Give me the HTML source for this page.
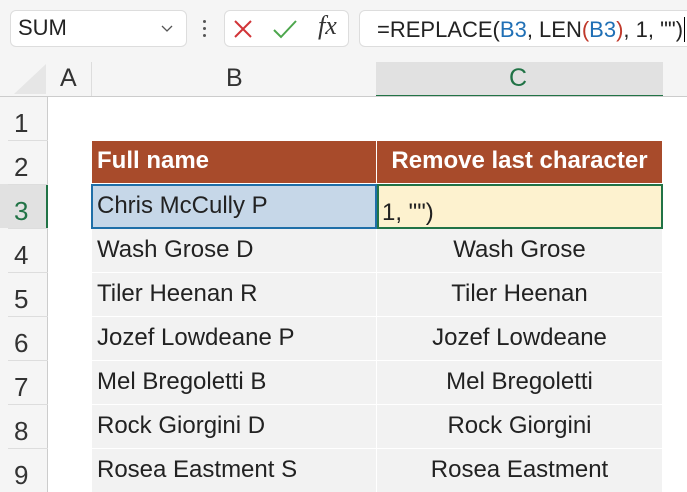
<!DOCTYPE html><html><head><style>
body{margin:0;width:687px;height:492px;overflow:hidden;background:#f5f5f5;font-family:"Liberation Sans",sans-serif;position:relative}
.a{position:absolute;box-sizing:border-box}
.t{font-size:24px;color:#222;white-space:nowrap}
</style></head><body>
<div class="a" style="left:10px;top:10px;width:177px;height:37px;background:#fff;border:1px solid #ddd;border-radius:6px"></div>
<div class="a t" style="left:18px;top:15px;font-size:22px">SUM</div>
<svg class="a" style="left:160px;top:24px" width="14" height="10"><path d="M2 2l5 5 5-5" stroke="#555" fill="none" stroke-width="1.3"/></svg>
<div class="a" style="left:203px;top:20px;width:3px;height:3px;background:#555;border-radius:2px;box-shadow:0 7px #555,0 14px #555"></div>
<div class="a" style="left:224px;top:10px;width:125px;height:37px;background:#fff;border:1px solid #ddd;border-radius:6px"></div>
<svg class="a" style="left:232px;top:18px" width="22" height="22"><path d="M3 3l16 16M19 3L3 19" stroke="#d13438" stroke-width="2"/></svg>
<svg class="a" style="left:272px;top:18px" width="26" height="22"><path d="M2 12l7 7L24 3" stroke="#4ca64c" fill="none" stroke-width="2"/></svg>
<div class="a" style="left:318px;top:11px;font:italic 26px 'Liberation Serif',serif;color:#333">fx</div>
<div class="a" style="left:359px;top:10px;width:340px;height:37px;background:#fff;border:1px solid #ddd;border-radius:6px"></div>
<div class="a t" style="left:377px;top:17px;font-size:22px">=REPLACE(<span style="color:#1f6fb5">B3</span>, LEN<span style="color:#c0392b">(</span><span style="color:#1f6fb5">B3</span><span style="color:#c0392b">)</span>, 1, "")<span style="border-left:1px solid #000;margin-left:1px"></span></div>
<div class="a" style="left:14px;top:64px;width:32px;height:30px;background:#e6e6e6;clip-path:polygon(100% 0,100% 100%,0 100%)"></div>
<div class="a t" style="left:60px;top:64px;color:#333;font-size:25px">A</div>
<div class="a" style="left:91px;top:62px;width:1px;height:34px;background:#ddd"></div>
<div class="a t" style="left:226px;top:64px;color:#333;font-size:25px">B</div>
<div class="a" style="left:376px;top:62px;width:287px;height:35px;background:#e1e1e1;border-bottom:2px solid #217346"></div>
<div class="a t" style="left:509px;top:64px;color:#217346;font-size:25px">C</div>
<div class="a" style="left:48px;top:96px;width:639px;height:396px;background:#fff"></div>
<div class="a" style="left:47px;top:96px;width:1px;height:396px;background:#ccc"></div>
<div class="a" style="left:0;top:96px;width:687px;height:1px;background:#ccc"></div>
<div class="a t" style="left:14px;top:108px;color:#333;font-size:26px">1</div>
<div class="a t" style="left:14px;top:152px;color:#333;font-size:26px">2</div>
<div class="a" style="left:0;top:184px;width:48px;height:44px;background:#e1e1e1;border-right:2px solid #217346"></div>
<div class="a t" style="left:14px;top:196px;color:#217346;font-size:26px">3</div>
<div class="a t" style="left:14px;top:240px;color:#333;font-size:26px">4</div>
<div class="a t" style="left:14px;top:284px;color:#333;font-size:26px">5</div>
<div class="a t" style="left:14px;top:328px;color:#333;font-size:26px">6</div>
<div class="a t" style="left:14px;top:372px;color:#333;font-size:26px">7</div>
<div class="a t" style="left:14px;top:416px;color:#333;font-size:26px">8</div>
<div class="a t" style="left:14px;top:460px;color:#333;font-size:26px">9</div>
<div class="a" style="left:8px;top:140px;width:40px;height:1px;background:#ddd;box-shadow:0 44px #ddd,0 88px #ddd,0 132px #ddd,0 176px #ddd,0 220px #ddd,0 264px #ddd,0 308px #ddd"></div>
<div class="a" style="left:92px;top:141px;width:284px;height:42px;background:#a84b2b"></div>
<div class="a" style="left:377px;top:141px;width:285px;height:42px;background:#a84b2b"></div>
<div class="a t" style="left:97px;top:147px;color:#fff;font-weight:bold">Full name</div>
<div class="a t" style="left:377px;width:285px;text-align:center;top:147px;color:#fff;font-weight:bold">Remove last character</div>
<div class="a" style="left:91px;top:184px;width:286px;height:45px;background:#c6d7e8;border:2px solid #1f6fa8"></div>
<div class="a" style="left:377px;top:184px;width:286px;height:45px;background:#fdf2cf;border:2px solid #217346"></div>
<div class="a t" style="left:97px;top:192px">Chris McCully P</div>
<div class="a t" style="left:382px;top:199px">1, "")</div>
<div class="a" style="left:92px;top:229px;width:284px;height:43px;background:#f2f2f2"></div><div class="a" style="left:377px;top:229px;width:285px;height:43px;background:#f2f2f2"></div>
<div class="a t" style="left:97px;top:236px">Wash Grose D</div><div class="a t" style="left:377px;width:285px;text-align:center;top:236px">Wash Grose</div>
<div class="a" style="left:92px;top:273px;width:284px;height:43px;background:#f2f2f2"></div><div class="a" style="left:377px;top:273px;width:285px;height:43px;background:#f2f2f2"></div>
<div class="a t" style="left:97px;top:280px">Tiler Heenan R</div><div class="a t" style="left:377px;width:285px;text-align:center;top:280px">Tiler Heenan</div>
<div class="a" style="left:92px;top:317px;width:284px;height:43px;background:#f2f2f2"></div><div class="a" style="left:377px;top:317px;width:285px;height:43px;background:#f2f2f2"></div>
<div class="a t" style="left:97px;top:324px">Jozef Lowdeane P</div><div class="a t" style="left:377px;width:285px;text-align:center;top:324px">Jozef Lowdeane</div>
<div class="a" style="left:92px;top:361px;width:284px;height:43px;background:#f2f2f2"></div><div class="a" style="left:377px;top:361px;width:285px;height:43px;background:#f2f2f2"></div>
<div class="a t" style="left:97px;top:368px">Mel Bregoletti B</div><div class="a t" style="left:377px;width:285px;text-align:center;top:368px">Mel Bregoletti</div>
<div class="a" style="left:92px;top:405px;width:284px;height:43px;background:#f2f2f2"></div><div class="a" style="left:377px;top:405px;width:285px;height:43px;background:#f2f2f2"></div>
<div class="a t" style="left:97px;top:412px">Rock Giorgini D</div><div class="a t" style="left:377px;width:285px;text-align:center;top:412px">Rock Giorgini</div>
<div class="a" style="left:92px;top:449px;width:284px;height:43px;background:#f2f2f2"></div><div class="a" style="left:377px;top:449px;width:285px;height:43px;background:#f2f2f2"></div>
<div class="a t" style="left:97px;top:456px">Rosea Eastment S</div><div class="a t" style="left:377px;width:285px;text-align:center;top:456px">Rosea Eastment</div>
</body></html>
